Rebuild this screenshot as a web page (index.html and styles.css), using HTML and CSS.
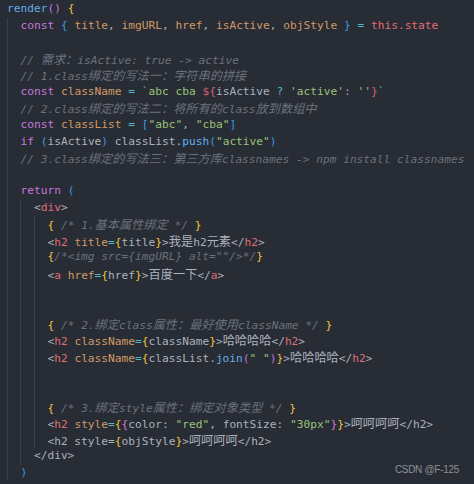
FILE: index.html
```html
<!DOCTYPE html>
<html lang="zh">
<head>
<meta charset="utf-8">
<title>render code</title>
<link rel="stylesheet" href="styles.css">
</head>
<body>
<main class="editor">
  <div class="code">
    <div class="ln"><span class="f">render</span><span class="pp">()</span> <span class="y">{</span></div>
    <div class="guide">
      <div class="ln">  <span class="k">const</span> <span class="bl">{</span> <span class="v">title</span>, <span class="v">imgURL</span>, <span class="v">href</span>, <span class="v">isActive</span>, <span class="v">objStyle</span> <span class="bl">}</span> <span class="o">=</span> <span class="t">this.state</span></div>
      <div class="ln"></div>
      <div class="ln">  <span class="c">// <span class="cj">需求：</span>isActive: true -&gt; active</span></div>
      <div class="ln">  <span class="c">// 1.class<span class="cj">绑定的写法一：字符串的拼接</span></span></div>
      <div class="ln">  <span class="k">const</span> <span class="v">className</span> <span class="o">=</span> <span class="o">`</span><span class="s">abc cba </span><span class="r">${</span>isActive <span class="o">?</span> <span class="s">'active'</span>: <span class="s">''</span><span class="r">}</span><span class="o">`</span></div>
      <div class="ln">  <span class="c">// 2.class<span class="cj">绑定的写法二：将所有的</span>class<span class="cj">放到数组中</span></span></div>
      <div class="ln">  <span class="k">const</span> <span class="v">classList</span> <span class="o">=</span> <span class="bl">[</span><span class="s">"abc"</span>, <span class="s">"cba"</span><span class="bl">]</span></div>
      <div class="ln">  <span class="k">if</span> <span class="bl">(</span>isActive<span class="bl">)</span> classList.<span class="f">push</span><span class="bl">(</span><span class="s">"active"</span><span class="bl">)</span></div>
      <div class="ln">  <span class="c">// 3.class<span class="cj">绑定的写法三：第三方库</span>classnames -&gt; npm install classnames</span></div>
      <div class="ln"></div>
      <div class="ln">  <span class="k">return</span> <span class="bl">(</span></div>
      <div class="guide indent">
        <div class="ln">  &lt;<span class="tg">div</span>&gt;</div>
        <div class="guide indent">
          <div class="ln">  <span class="y">{</span> <span class="c">/* 1.<span class="cj">基本属性绑定</span> */</span> <span class="y">}</span></div>
          <div class="ln">  &lt;<span class="tg">h2</span> <span class="v">title</span><span class="o">=</span><span class="y">{</span>title<span class="y">}</span>&gt;<span class="cj">我是</span>h2<span class="cj">元素</span>&lt;/<span class="tg">h2</span>&gt;</div>
          <div class="ln">  <span class="y">{</span><span class="c">/*&lt;img src={imgURL} alt=""/&gt;*/</span><span class="y">}</span></div>
          <div class="ln">  &lt;<span class="tg">a</span> <span class="v">href</span><span class="o">=</span><span class="y">{</span>href<span class="y">}</span>&gt;<span class="cj">百度一下</span>&lt;/<span class="tg">a</span>&gt;</div>
          <div class="ln"></div>
          <div class="ln"></div>
          <div class="ln">  <span class="y">{</span> <span class="c">/* 2.<span class="cj">绑定</span>class<span class="cj">属性：最好使用</span>className */</span> <span class="y">}</span></div>
          <div class="ln">  &lt;<span class="tg">h2</span> <span class="v">className</span><span class="o">=</span><span class="y">{</span>className<span class="y">}</span>&gt;<span class="cj">哈哈哈哈</span>&lt;/<span class="tg">h2</span>&gt;</div>
          <div class="ln">  &lt;<span class="tg">h2</span> <span class="v">className</span><span class="o">=</span><span class="y">{</span>classList.<span class="f">join</span><span class="pp">(</span><span class="s">" "</span><span class="pp">)</span><span class="y">}</span>&gt;<span class="cj">哈哈哈哈</span>&lt;/<span class="tg">h2</span>&gt;</div>
          <div class="ln"></div>
          <div class="ln"></div>
          <div class="ln">  <span class="y">{</span> <span class="c">/* 3.<span class="cj">绑定</span>style<span class="cj">属性：绑定对象类型</span> */</span> <span class="y">}</span></div>
          <div class="ln">  &lt;<span class="tg">h2</span> <span class="v">style</span><span class="o">=</span><span class="y">{</span><span class="pp">{</span>color: <span class="s">"red"</span>, fontSize: <span class="s">"30px"</span><span class="pp">}</span><span class="y">}</span>&gt;<span class="cj">呵呵呵呵</span>&lt;/h2&gt;</div>
          <div class="ln">  &lt;h2 style=<span class="y">{</span>objStyle<span class="y">}</span>&gt;<span class="cj">呵呵呵呵</span>&lt;/h2&gt;</div>
        </div>
        <div class="ln">  &lt;/div&gt;</div>
      </div>
      <div class="ln">  <span class="bl">)</span></div>
    </div>
  </div>
  <div class="mark">CSDN @F-125</div>
</main>
</body>
</html>
```
FILE: styles.css
```css
html, body {
  margin: 0;
  padding: 0;
  background: #282c34;
}

.editor {
  position: relative;
  width: 474px;
  height: 484px;
  overflow: hidden;
  background: #282c34;
}

.code {
  padding: 1px 0 0 7px;
  font-family: "DejaVu Sans Mono", "Noto Sans CJK SC", monospace;
  font-size: 11.2px;
  color: #abb2bf;
}

.ln {
  height: 16.57px;
  line-height: 16.57px;
  white-space: pre;
}

.guide {
  box-shadow: inset 1px 0 0 #3a3f48;
}

.indent {
  margin-left: 2ch;
}

.cj {
  font-family: "Noto Sans CJK SC", sans-serif;
  font-size: 12.2px;
}

.k { color: #c678dd; }
.f { color: #61afef; }
.v { color: #d19a66; }
.o { color: #56b6c2; }
.t { color: #e06c75; }
.s { color: #98c379; }
.r { color: #d55c6a; }
.tg { color: #e06c75; }
.y { color: #f0c43a; }
.pp { color: #c678dd; }
.bl { color: #3f97e4; }
.c { color: #6b717c; font-style: italic; }

.mark {
  position: absolute;
  right: 15px;
  top: 464px;
  font-family: "Liberation Sans", Arial, sans-serif;
  font-size: 10px;
  letter-spacing: -0.3px;
  color: #8d929b;
}
```
